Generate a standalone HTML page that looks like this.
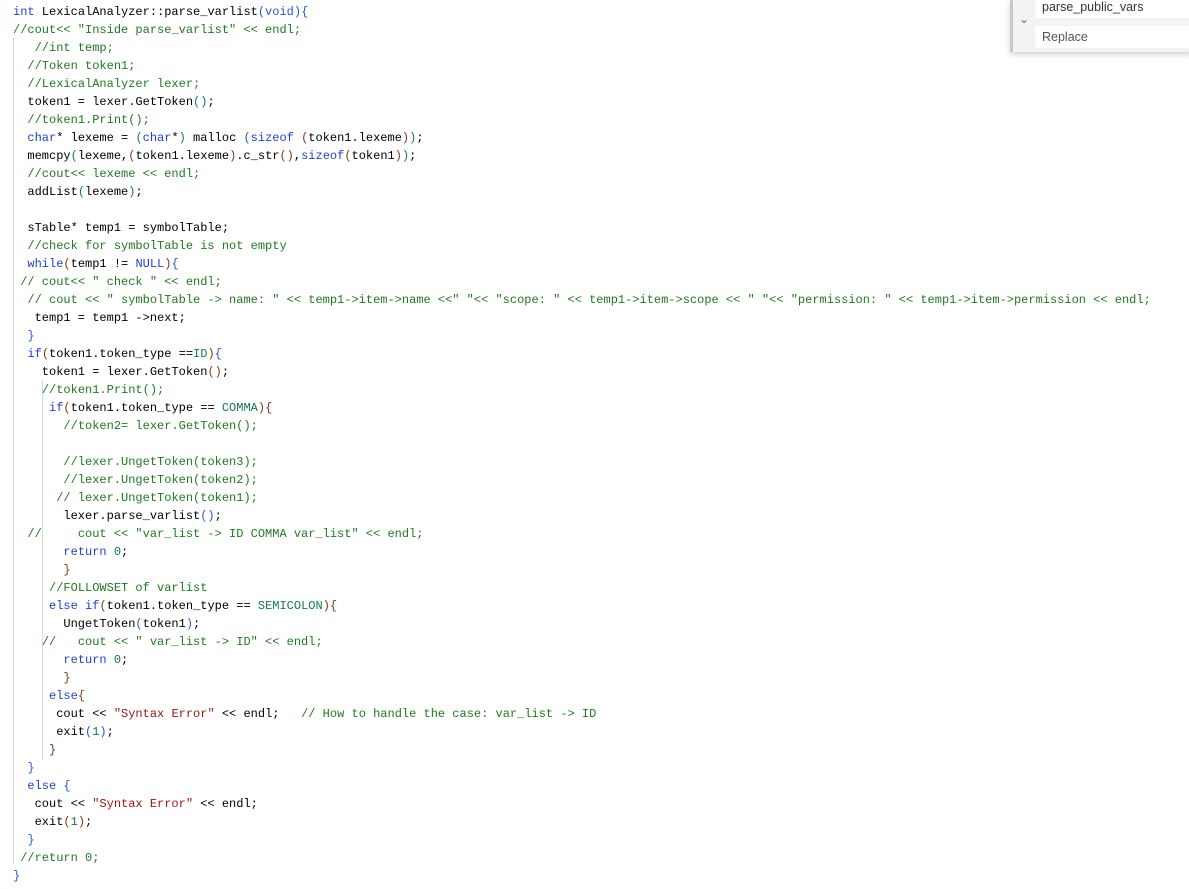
<!DOCTYPE html>
<html><head><meta charset="utf-8"><style>
body{margin:0;width:1189px;height:889px;background:#fff;overflow:hidden;position:relative;font-family:"Liberation Mono",monospace;font-size:12px;color:#000}
pre{margin:0;position:absolute;left:13px;top:3px;font:12px/18px "Liberation Mono",monospace;white-space:pre}
.k{color:#1f3fd6}.c{color:#1f7a1f}.s{color:#a31515}.n{color:#0f7a55}.p{color:#7a3a1a}.b{color:#2a56d8}.e{color:#0e7a60}
.g{position:absolute;width:1px;background:#d8d8d8}
.panel{position:absolute;left:1010px;top:0;width:179px;height:52px;background:#f3f3f3;border-left:3px solid #c8c8c8;box-shadow:0 2px 6px rgba(0,0,0,.2);font-family:"Liberation Sans",sans-serif;font-size:12.5px;color:#333}
.inp{position:absolute;left:22px;width:160px;height:20px;background:#fff;padding-left:7px;line-height:18px}
</style></head><body>
<div class="g" style="left:13px;top:38px;height:826px"></div>
<div class="g" style="left:42px;top:380px;height:380px"></div>
<pre><span class="k">int</span> LexicalAnalyzer::parse_varlist<span class="b">(void){</span>
<span class="c">//cout&lt;&lt; "Inside parse_varlist" &lt;&lt; endl;</span>
   <span class="c">//int temp;</span>
  <span class="c">//Token token1;</span>
  <span class="c">//LexicalAnalyzer lexer;</span>
  token1 = lexer.GetToken<span class="e">()</span>;
  <span class="c">//token1.Print();</span>
  <span class="k">char</span>* lexeme = <span class="e">(</span><span class="k">char</span>*<span class="e">)</span> malloc <span class="e">(</span><span class="k">sizeof</span> <span class="p">(</span>token1.lexeme<span class="p">)</span><span class="e">)</span>;
  memcpy<span class="e">(</span>lexeme,<span class="p">(</span>token1.lexeme<span class="p">)</span>.c_str<span class="p">()</span>,<span class="k">sizeof</span><span class="p">(</span>token1<span class="p">)</span><span class="e">)</span>;
  <span class="c">//cout&lt;&lt; lexeme &lt;&lt; endl;</span>
  addList<span class="e">(</span>lexeme<span class="e">)</span>;

  sTable* temp1 = symbolTable;
  <span class="c">//check for symbolTable is not empty</span>
  <span class="k">while</span><span class="p">(</span>temp1 != <span class="k">NULL</span><span class="p">)</span><span class="b">{</span>
 <span class="c">// cout&lt;&lt; " check " &lt;&lt; endl;</span>
  <span class="c">// cout &lt;&lt; " symbolTable -&gt; name: " &lt;&lt; temp1-&gt;item-&gt;name &lt;&lt;" "&lt;&lt; "scope: " &lt;&lt; temp1-&gt;item-&gt;scope &lt;&lt; " "&lt;&lt; "permission: " &lt;&lt; temp1-&gt;item-&gt;permission &lt;&lt; endl;</span>
   temp1 = temp1 -&gt;next;
  <span class="b">}</span>
  <span class="k">if</span><span class="p">(</span>token1.token_type ==<span class="n">ID</span><span class="p">)</span><span class="b">{</span>
    token1 = lexer.GetToken<span class="p">()</span>;
    <span class="c">//token1.Print();</span>
     <span class="k">if</span><span class="p">(</span>token1.token_type == <span class="n">COMMA</span><span class="p">){</span>
       <span class="c">//token2= lexer.GetToken();</span>

       <span class="c">//lexer.UngetToken(token3);</span>
       <span class="c">//lexer.UngetToken(token2);</span>
      <span class="c">// lexer.UngetToken(token1);</span>
       lexer.parse_varlist<span class="b">()</span>;
  <span class="c">//     cout &lt;&lt; "var_list -&gt; ID COMMA var_list" &lt;&lt; endl;</span>
       <span class="k">return</span> <span class="n">0</span>;
       <span class="p">}</span>
     <span class="c">//FOLLOWSET of varlist</span>
     <span class="k">else if</span><span class="p">(</span>token1.token_type == <span class="n">SEMICOLON</span><span class="p">){</span>
       UngetToken<span class="b">(</span>token1<span class="b">)</span>;
    <span class="c">//   cout &lt;&lt; " var_list -&gt; ID" &lt;&lt; endl;</span>
       <span class="k">return</span> <span class="n">0</span>;
       <span class="p">}</span>
     <span class="k">else</span><span class="p">{</span>
      cout &lt;&lt; <span class="s">"Syntax Error"</span> &lt;&lt; endl;   <span class="c">// How to handle the case: var_list -&gt; ID</span>
      exit<span class="b">(</span><span class="n">1</span><span class="b">)</span>;
     <span class="p">}</span>
  <span class="b">}</span>
  <span class="k">else</span> <span class="b">{</span>
   cout &lt;&lt; <span class="s">"Syntax Error"</span> &lt;&lt; endl;
   exit<span class="p">(</span><span class="n">1</span><span class="p">)</span>;
  <span class="b">}</span>
 <span class="c">//return 0;</span>
<span class="b">}</span></pre>
<div class="panel">
<div class="inp" style="top:-2px">parse_public_vars</div>
<div style="position:absolute;left:6px;top:12px;color:#666;font-size:12px">&#8964;</div>
<div class="inp" style="top:26px;height:22px;line-height:22px;color:#555">Replace</div>
</div>
</body></html>
